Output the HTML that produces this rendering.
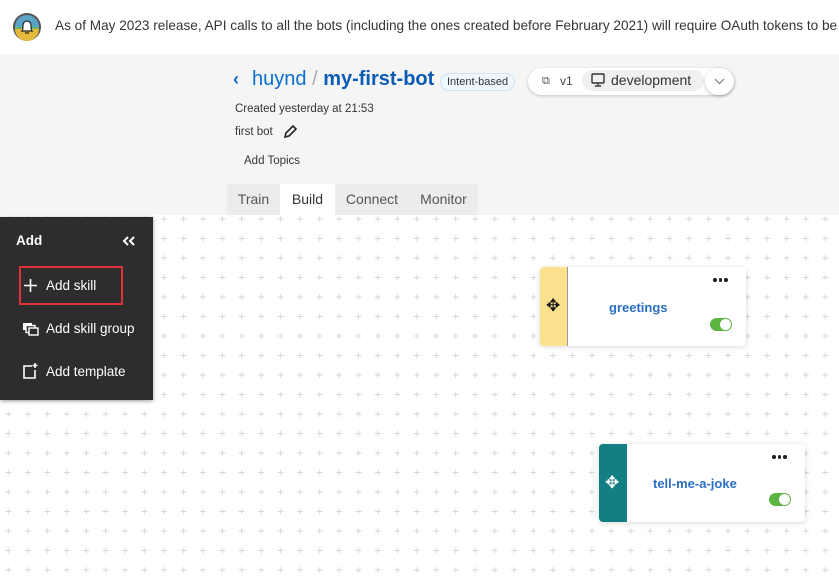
<!DOCTYPE html>
<html><head><meta charset="utf-8"><style>
*{box-sizing:border-box;margin:0;padding:0}
body{width:839px;height:573px;overflow:hidden;background:#fff;font-family:"Liberation Sans",sans-serif;position:relative}
.banner{position:absolute;left:0;top:0;width:839px;height:54px;background:#fff}
.banner .txt{position:absolute;left:55px;top:18px;font-size:13.6px;color:#32363a;white-space:nowrap}
.hdr{position:absolute;left:0;top:54px;width:839px;height:161px;background:#f5f5f5}
.canvas{position:absolute;left:0;top:215px;width:839px;height:358px;background:#fff}
.abs{position:absolute;white-space:nowrap}
.tab{position:absolute;top:184px;height:31px;background:#ececec;color:#555;font-size:14px;line-height:31px;text-align:center}
.panel{position:absolute;left:0;top:217px;width:153px;height:183px;background:#2d2d2d;box-shadow:0 1px 4px rgba(0,0,0,.4);color:#fff;font-size:13.5px}
.card{position:absolute;background:#fff;border-radius:4px;box-shadow:0 1px 6px rgba(0,0,0,.15);overflow:hidden}
.card .bar{position:absolute;left:0;top:0;bottom:0;width:28px}
.card .name{position:absolute;color:#2a6fc4;font-weight:bold;font-size:13px}
.tog{position:absolute;width:22px;height:13px;border-radius:7px;background:#5cb443}
.tog:after{content:"";position:absolute;right:1px;top:1px;width:11px;height:11px;border-radius:50%;background:#fff}
.dots{position:absolute;width:16px;height:4px}
.dots i{position:absolute;top:0;width:3.5px;height:3.5px;border-radius:50%;background:#222}
</style></head><body>
<div class="banner">
<svg class="abs" style="left:12px;top:12px" width="30" height="30" viewBox="0 0 30 30"><circle cx="15" cy="15" r="14" fill="#555"/><circle cx="15" cy="15" r="12" fill="#5aa4c8"/><path d="M3 17h24a12 12 0 0 1-24 0z" fill="#e2b93a"/><path d="M3 15h24v2H3z" fill="#69b36b"/><path d="M10 19c1-1 1-3 1-6a4 4 0 0 1 8 0c0 3 0 5 1 6z" fill="#fff" stroke="#222" stroke-width="1.2"/><path d="M13 21h4" stroke="#222" stroke-width="1.2"/></svg>
<div class="txt">As of May 2023 release, API calls to all the bots (including the ones created before February 2021) will require OAuth tokens to be</div>
</div>
<div class="hdr"></div>
<div class="abs" style="left:233px;top:69px;font-size:18px;color:#0a6ed1;font-weight:bold">‹</div>
<div class="abs" style="left:252px;top:68px;font-size:20px;color:#0a6ed1">huynd <span style="color:#aaa">/</span> <b style="color:#0a5bb5">my-first-bot</b></div>
<div class="abs" style="left:440px;top:73px;height:18px;padding:0 6px;border:1px solid #cde4f3;border-radius:9px;background:#eef7fc;font-size:11px;line-height:16px;color:#32363a">Intent-based</div>
<div class="abs" style="left:528px;top:68px;width:206px;height:27px;background:#fff;border-radius:14px;box-shadow:0 1px 3px rgba(0,0,0,.2)"></div>
<div class="abs" style="left:542px;top:75px;font-size:11px;color:#555">⧉</div>
<div class="abs" style="left:560px;top:74px;font-size:12px;color:#444">v1</div>
<div class="abs" style="left:582px;top:70px;width:122px;height:21px;background:#f0f0f0;border-radius:11px"></div>
<svg class="abs" style="left:591px;top:73px" width="14" height="14" viewBox="0 0 14 14"><rect x="1" y="1" width="12" height="9" rx="1" fill="none" stroke="#333" stroke-width="1.4"/><path d="M7 10v2M4 13h6" stroke="#333" stroke-width="1.4"/></svg>
<div class="abs" style="left:611px;top:72px;font-size:14px;color:#333">development</div>
<div class="abs" style="left:705px;top:68px;width:29px;height:27px;border-radius:14px;background:#fff;box-shadow:0 1px 3px rgba(0,0,0,.25)"><svg style="position:absolute;left:9px;top:10px" width="11" height="7" viewBox="0 0 11 7"><path d="M1 1l4.5 4.5L10 1" fill="none" stroke="#888" stroke-width="1.3"/></svg></div>
<div class="abs" style="left:235px;top:103px;font-size:11.5px;color:#32363a">Created yesterday at 21:53</div>
<div class="abs" style="left:235px;top:126px;font-size:11.5px;color:#32363a">first bot</div>
<svg class="abs" style="left:283px;top:124px" width="15" height="15" viewBox="0 0 15 15"><path d="M2 13l1-4 7-7 3 3-7 7z" fill="none" stroke="#222" stroke-width="1.6"/></svg>
<div class="abs" style="left:244px;top:155px;font-size:11.5px;color:#32363a">Add Topics</div>
<div class="tab" style="left:227px;width:53px">Train</div>
<div class="tab" style="left:280px;width:55px;background:#fff;color:#333">Build</div>
<div class="tab" style="left:335px;width:74px">Connect</div>
<div class="tab" style="left:409px;width:69px">Monitor</div>
<div class="canvas"><svg width="839" height="358"><defs><pattern id="p" x="-1.3" y="-6" width="19.45" height="19.5" patternUnits="userSpaceOnUse"><path d="M9.7 7v6M6.7 10h6" stroke="#d6d6d6" stroke-width="0.9"/></pattern></defs><rect width="839" height="358" fill="url(#p)"/></svg></div>
<div class="panel">
<div class="abs" style="left:16px;top:16px;font-weight:bold">Add</div>
<svg class="abs" style="left:122px;top:19px" width="14" height="10" viewBox="0 0 14 10"><path d="M6 1L2 5l4 4M12 1L8 5l4 4" fill="none" stroke="#fff" stroke-width="2"/></svg>
<div class="abs" style="left:19px;top:49px;width:104px;height:39px;border:2px solid #e0303a"></div>
<svg class="abs" style="left:24px;top:62px" width="13" height="13" viewBox="0 0 13 13"><path d="M6.5 0v13M0 6.5h13" stroke="#fff" stroke-width="1.6"/></svg>
<div class="abs" style="left:46px;top:61px">Add skill</div>
<svg class="abs" style="left:22px;top:105px" width="17" height="14" viewBox="0 0 17 14"><rect x="1" y="1" width="9" height="7" fill="#fff"/><rect x="4" y="3.5" width="9" height="7" fill="#2d2d2d" stroke="#fff" stroke-width="1.4"/><rect x="7" y="6" width="9" height="7" fill="#2d2d2d" stroke="#fff" stroke-width="1.4"/></svg>
<div class="abs" style="left:46px;top:104px">Add skill group</div>
<svg class="abs" style="left:22px;top:146px" width="16" height="16" viewBox="0 0 16 16"><path d="M10 3H2v12h11V7" fill="none" stroke="#fff" stroke-width="1.6"/><path d="M13 0v5M10.5 2.5h5" stroke="#fff" stroke-width="1.6"/></svg>
<div class="abs" style="left:46px;top:147px">Add template</div>
</div>
<div class="card" style="left:540px;top:267px;width:206px;height:79px">
<div class="bar" style="background:#fbe08d;border-right:1.5px solid #999"></div>
<div class="abs" style="left:6px;top:29px;font-size:17px;color:#111">✥</div>
<div class="dots" style="left:173px;top:11px"><i style="left:0"></i><i style="left:5.5px"></i><i style="left:11px"></i></div>
<div class="name" style="left:69px;top:33px">greetings</div>
<div class="tog" style="left:170px;top:51px"></div>
</div>
<div class="card" style="left:599px;top:444px;width:206px;height:78px">
<div class="bar" style="background:#137f85"></div>
<div class="abs" style="left:6px;top:29px;font-size:17px;color:#fff">✥</div>
<div class="dots" style="left:173px;top:11px"><i style="left:0"></i><i style="left:5.5px"></i><i style="left:11px"></i></div>
<div class="name" style="left:54px;top:32px">tell-me-a-joke</div>
<div class="tog" style="left:170px;top:49px"></div>
</div>
</body></html>
